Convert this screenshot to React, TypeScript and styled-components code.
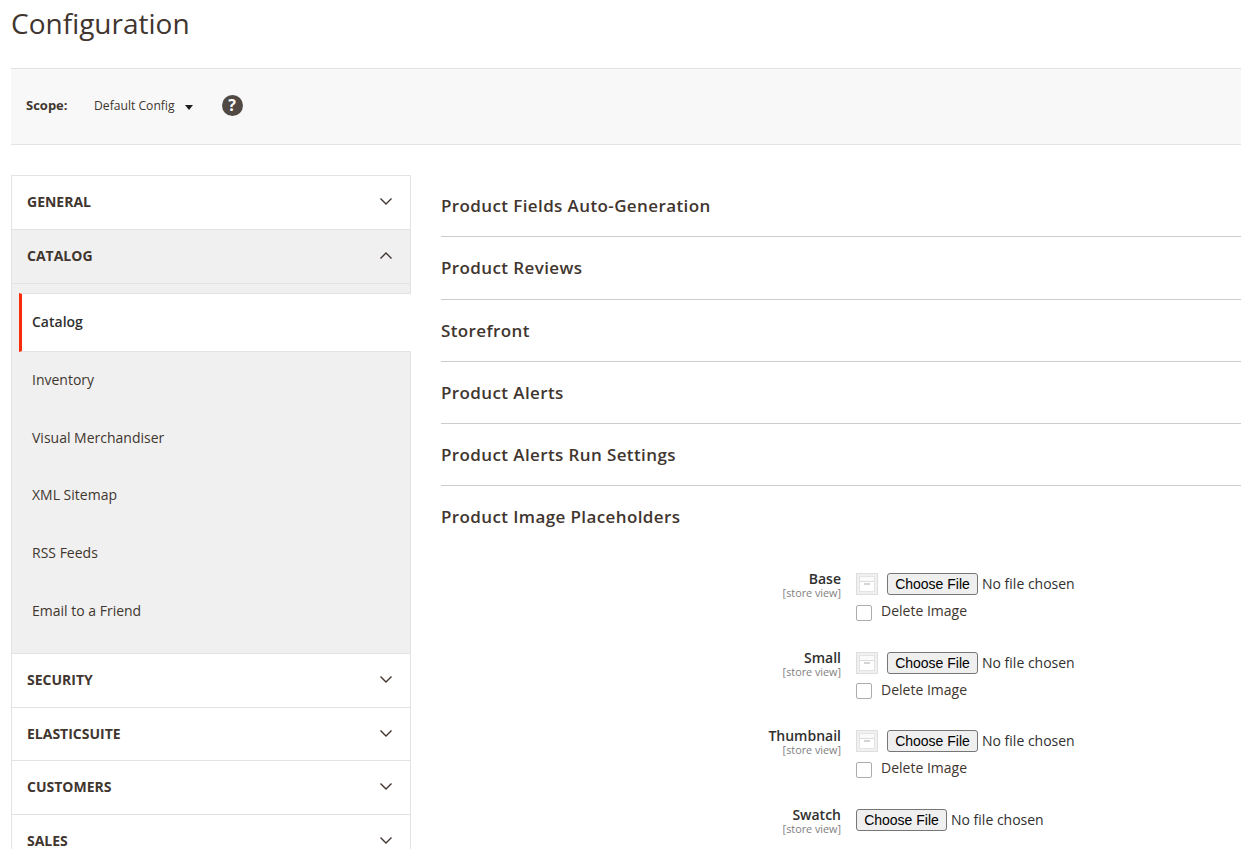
import React from 'react';
import styled, { createGlobalStyle } from 'styled-components';

const Global = createGlobalStyle`
  html, body { margin: 0; padding: 0; background: #fff; }
  body { font-family: "Open Sans", "Liberation Sans", sans-serif; color: #41362f; overflow: hidden; height: 849px; }
  * { box-sizing: border-box; }
`;

const Page = styled.div`
  width: 1241px;
  height: 849px;
  padding-left: 11px;
  overflow: hidden;
`;

const Title = styled.h1`
  margin: 0;
  height: 68px;
  padding-top: 4px;
  font-size: 28px;
  line-height: 38px;
  font-weight: 400;
  color: #41362f;
`;

const ScopeBar = styled.div`
  height: 77px;
  display: flex;
  align-items: center;
  padding-left: 15px;
  padding-bottom: 2px;
  background: #f8f8f8;
  border-top: 1px solid #e3e3e3;
  border-bottom: 1px solid #e3e3e3;
  font-size: 12.15px;
`;

const ScopeLabel = styled.span`
  font-weight: 700;
  font-size: 13px;
  width: 68px;
  margin-bottom: 2px;
`;

const ScopeValue = styled.span`
  color: #41362f;
`;

const Caret = styled.span`
  margin-left: 10px;
  margin-top: 3px;
  width: 0;
  height: 0;
  border-left: 4.5px solid transparent;
  border-right: 4.5px solid transparent;
  border-top: 5px solid #1c1c1c;
`;

const Help = styled.span`
  margin-left: 29px;
  width: 21px;
  height: 21px;
  border-radius: 50%;
  background: #514943;
  color: #fff;
  font-weight: 700;
  font-size: 16px;
  line-height: 21px;
  text-align: center;
`;

const Columns = styled.div`
  display: grid;
  grid-template-columns: 400px 800px;
  column-gap: 30px;
  margin-top: 30px;
`;

const Sidebar = styled.nav`
  border: 1px solid #e3e3e3;
  border-bottom: 0;
  width: 400px;
`;

const Group = styled.div<{ $open?: boolean }>`
  height: 53.75px;
  padding: 0 18px 2px 15px;
  display: flex;
  align-items: center;
  justify-content: space-between;
  background: ${(p) => (p.$open ? '#f0f0f0' : '#fff')};
  border-bottom: 1px solid #e3e3e3;
  font-size: 14px;
  font-weight: 700;
  color: #41362f;
  text-transform: uppercase;
`;

const Chevron = styled.svg`
  width: 12px;
  height: 7px;
  flex: none;
  fill: none;
  stroke: #41362f;
  stroke-width: 1.4;
`;

const SubList = styled.div`
  height: 370.4px;
  background: #f0f0f0;
  padding-top: 9.5px;
  border-bottom: 1px solid #e3e3e3;
`;

const SubItem = styled.div<{ $active?: boolean }>`
  height: ${(p) => (p.$active ? '58.75px' : '57.75px')};
  margin-left: 7px;
  padding-left: 10px;
  padding-bottom: ${(p) => (p.$active ? '1px' : '0')};
  display: flex;
  align-items: center;
  font-size: 14px;
  color: ${(p) => (p.$active ? '#303030' : '#41362f')};
  font-weight: ${(p) => (p.$active ? 600 : 400)};
  background: ${(p) => (p.$active ? '#fff' : 'transparent')};
  border-left: 3px solid ${(p) => (p.$active ? '#fa2c0b' : 'transparent')};
  border-top: ${(p) => (p.$active ? '1px solid #e3e3e3' : '0')};
  border-bottom: ${(p) => (p.$active ? '1px solid #e3e3e3' : '0')};
  margin-right: ${(p) => (p.$active ? '-1px' : '0')};
  margin-bottom: ${(p) => (p.$active ? '-1.15px' : '0')};
`;

const Main = styled.main``;

const Section = styled.div<{ $last?: boolean }>`
  height: 62.25px;
  display: flex;
  align-items: center;
  padding-bottom: ${(p) => (p.$last ? '1px' : '0')};
  border-bottom: ${(p) => (p.$last ? '0' : '1px solid #cccccc')};
  font-size: 17px;
  font-weight: 600;
  letter-spacing: 0.39px;
  color: #41362f;
`;

const Fields = styled.div`
  display: flex;
  flex-direction: column;
  padding-top: 24.5px;
`;

const Field = styled.div`
  display: grid;
  grid-template-columns: 400px 1fr;
  column-gap: 15px;
  height: 78.7px;
`;

const FieldLabel = styled.div`
  text-align: right;
  margin-top: -2.2px;
`;

const LabelName = styled.div`
  font-size: 14px;
  font-weight: 600;
  line-height: 16px;
  color: #303030;
`;

const Scope = styled.div`
  font-size: 10.8px;
  line-height: 12px;
  color: #808080;
`;

const Control = styled.div`
  display: flex;
  flex-direction: column;
`;

const FileRow = styled.div`
  display: flex;
  align-items: center;
  height: 22px;
`;

const Thumb = styled.svg`
  width: 22px;
  height: 22px;
  margin-right: 9px;
  flex: none;
`;

const FileButton = styled.button`
  height: 22px;
  width: 91px;
  padding: 0;
  border: 1px solid #767676;
  border-radius: 3px;
  background: #efefef;
  color: #000;
  font-family: "Liberation Sans", Arial, sans-serif;
  font-size: 14px;
  line-height: 20px;
`;

const NoFile = styled.span`
  margin-left: 4px;
  margin-bottom: 1px;
  font-size: 14px;
  color: #303030;
`;

const DeleteRow = styled.label`
  display: flex;
  align-items: flex-start;
  margin-top: 10px;
  height: 16px;
  font-size: 14px;
  line-height: 12px;
  color: #41362f;
`;

const Check = styled.span`
  width: 16px;
  height: 16px;
  margin-top: -0.3px;
  margin-right: 9px;
  background: #fff;
  border: 1px solid #adadad;
  border-radius: 2px;
`;

const ThumbIcon = () => (
  <Thumb viewBox="0 0 22 22">
    <rect x="0.5" y="0.5" width="21" height="21" fill="#f0f0f0" stroke="#dedede" />
    <rect x="3.5" y="3.5" width="15" height="15" fill="#fafafa" stroke="#e4e4e4" />
    <rect x="4" y="9" width="14" height="9" fill="#fff" />
    <rect x="4" y="8" width="14" height="1" fill="#dcdcdc" />
    <rect x="8" y="10" width="6" height="2" fill="#d4d4d4" />
  </Thumb>
);

const Down = () => (
  <Chevron viewBox="0 0 12 7"><path d="M0.5 0.5 L6 6 L11.5 0.5" /></Chevron>
);
const Up = () => (
  <Chevron viewBox="0 0 12 7"><path d="M0.5 6.5 L6 1 L11.5 6.5" /></Chevron>
);

const groupsAfter = ['Security', 'Elasticsuite', 'Customers', 'Sales', 'Services'];
const subs = ['Inventory', 'Visual Merchandiser', 'XML Sitemap', 'RSS Feeds', 'Email to a Friend'];
const sections = [
  'Product Fields Auto-Generation',
  'Product Reviews',
  'Storefront',
  'Product Alerts',
  'Product Alerts Run Settings',
  'Product Image Placeholders',
];
const fields = ['Base', 'Small', 'Thumbnail'];

export default function App() {
  return (
    <Page>
      <Global />
      <Title>Configuration</Title>
      <ScopeBar>
        <ScopeLabel>Scope:</ScopeLabel>
        <ScopeValue>Default Config</ScopeValue>
        <Caret />
        <Help>?</Help>
      </ScopeBar>
      <Columns>
        <Sidebar>
          <Group>General<Down /></Group>
          <Group $open>Catalog<Up /></Group>
          <SubList>
            <SubItem $active>Catalog</SubItem>
            {subs.map((s) => <SubItem key={s}>{s}</SubItem>)}
          </SubList>
          {groupsAfter.map((g) => (
            <Group key={g}>{g}<Down /></Group>
          ))}
        </Sidebar>
        <Main>
          {sections.map((s, i) => (
            <Section key={s} $last={i === sections.length - 1}>{s}</Section>
          ))}
          <Fields>
            {fields.map((f) => (
              <Field key={f}>
                <FieldLabel>
                  <LabelName>{f}</LabelName>
                  <Scope>[store view]</Scope>
                </FieldLabel>
                <Control>
                  <FileRow>
                    <ThumbIcon />
                    <FileButton>Choose File</FileButton>
                    <NoFile>No file chosen</NoFile>
                  </FileRow>
                  <DeleteRow><Check />Delete Image</DeleteRow>
                </Control>
              </Field>
            ))}
            <Field>
              <FieldLabel>
                <LabelName>Swatch</LabelName>
                <Scope>[store view]</Scope>
              </FieldLabel>
              <Control>
                <FileRow>
                  <FileButton>Choose File</FileButton>
                  <NoFile>No file chosen</NoFile>
                </FileRow>
              </Control>
            </Field>
          </Fields>
        </Main>
      </Columns>
    </Page>
  );
}
